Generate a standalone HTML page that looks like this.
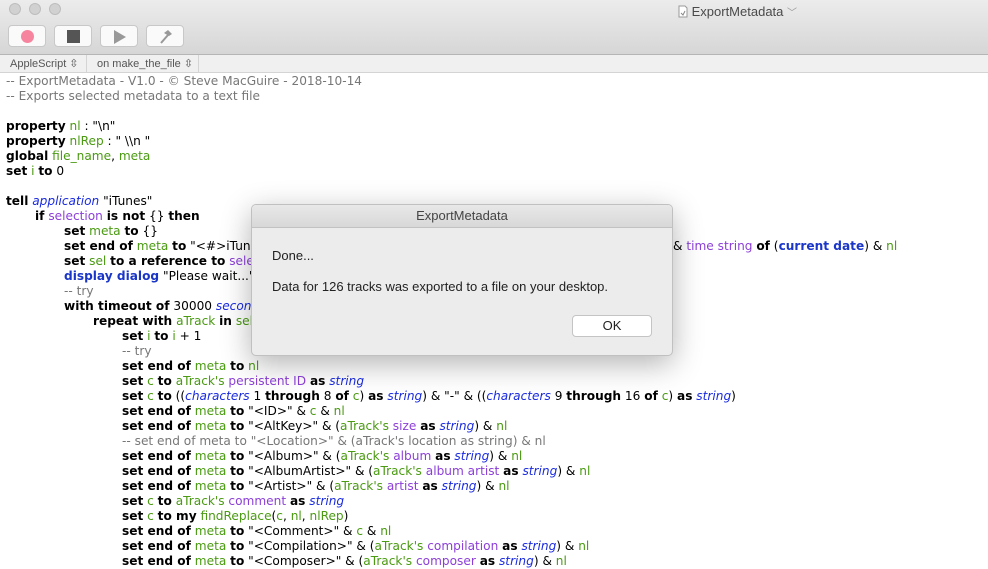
<!DOCTYPE html>
<html><head><meta charset="utf-8"><style>
body{margin:0;width:988px;height:560px;overflow:hidden;background:#fff;font-family:"DejaVu Sans",Verdana,sans-serif;position:relative}
.tb{position:absolute;left:0;top:0;width:988px;height:54px;background:linear-gradient(#ececec,#d6d6d6);border-bottom:1px solid #b5b5b5}
.tl{position:absolute;top:3px;width:12px;height:12px;border-radius:50%;background:#d1d1d1;border:1px solid #bdbdbd;box-sizing:border-box}
.btn{position:absolute;top:25px;width:38px;height:22px;background:#fafafa;border:1px solid #c8c8c8;border-radius:4px;box-sizing:border-box}
.title{position:absolute;left:678px;top:4px;font-family:"Liberation Sans",sans-serif;font-size:13px;color:#4a4a4a}
.nav{position:absolute;left:0;top:55px;width:988px;height:17px;background:#f0f0f0;border-bottom:1px solid #d4d4d4;font-family:"Liberation Sans",sans-serif;font-size:11px;color:#555}
.nav span{position:absolute;top:2px}
.code{position:absolute;left:6px;top:74px;font-size:12.15px;line-height:15px;white-space:pre;color:#000;tab-size:29px;-moz-tab-size:29px}
b{font-weight:bold}
.g{color:#4a9a12}.p{color:#8c3fd8}.i{color:#1a2bdf;font-style:italic}.c{color:#777}.bl{color:#1a36c8;font-weight:bold}
.dlg{position:absolute;left:251px;top:204px;width:420px;height:150px;background:#ececec;border:1px solid #c0c0c0;border-radius:5px;box-shadow:0 8px 30px rgba(0,0,0,.3);font-family:"Liberation Sans",sans-serif;font-size:13px;color:#222;overflow:hidden}
.dt{height:22px;line-height:22px;text-align:center;background:linear-gradient(#e8e8e8,#d8d8d8);border-bottom:1px solid #c2c2c2;color:#444}
</style></head><body>
<div class="tb">
<div class="tl" style="left:9px"></div><div class="tl" style="left:29px"></div><div class="tl" style="left:49px"></div>
<div class="btn" style="left:8px"><div style="position:absolute;left:12px;top:4px;width:13px;height:13px;border-radius:50%;background:#f7849e"></div></div>
<div class="btn" style="left:54px"><div style="position:absolute;left:12px;top:4px;width:13px;height:13px;background:#555"></div></div>
<div class="btn" style="left:100px"><svg style="position:absolute;left:12px;top:4px" width="14" height="14"><path d="M1 0 L13 7 L1 14Z" fill="#999"/></svg></div>
<div class="btn" style="left:146px"><svg style="position:absolute;left:11px;top:3px" width="16" height="16"><path d="M3 14 L10 6" stroke="#999" stroke-width="2"/><path d="M6 4 L10 1 L14 5 L11 7 Z" fill="#999"/></svg></div>
<div class="title"><svg width="10" height="13" style="vertical-align:-2px"><path d="M1 1h6l2 2v9H1z" fill="#fff" stroke="#999"/><path d="M3 8l2 2 2-4" stroke="#888" fill="none"/></svg> ExportMetadata <span style="color:#999;font-size:10px">﹀</span></div>
</div>
<div class="nav"><span style="left:10px">AppleScript ⇳</span><span style="left:86px;top:0;height:17px;border-left:1px solid #d4d4d4"></span><span style="left:97px">on make_the_file ⇳</span><span style="left:198px;top:0;height:17px;border-left:1px solid #d4d4d4"></span></div>
<div class="code"><span class="c">-- ExportMetadata - V1.0 - © Steve MacGuire - 2018-10-14
-- Exports selected metadata to a text file</span>

<b>property</b> <span class="g">nl</span> : "\n"
<b>property</b> <span class="g">nlRep</span> : " \\n "
<b>global</b> <span class="g">file_name</span>, <span class="g">meta</span>
<b>set</b> <span class="g">i</span> <b>to</b> 0

<b>tell</b> <span class="i">application</span> "iTunes"
	<b>if</b> <span class="p">selection</span> <b>is not</b> {} <b>then</b>
		<b>set</b> <span class="g">meta</span> <b>to</b> {}
		<b>set end of</b> <span class="g">meta</span> <b>to</b> "&lt;#&gt;iTunes
		<b>set</b> <span class="g">sel</span> <b>to a reference to</b> <span class="p">selection</span>
		<span class="bl">display dialog</span> "Please wait..."
		<span class="c">-- try</span>
		<b>with timeout of</b> 30000 <span class="i">seconds</span>
			<b>repeat with</b> <span class="g">aTrack</span> <b>in</b> <span class="g">sel</span>
				<b>set</b> <span class="g">i</span> <b>to</b> <span class="g">i</span> + 1
				<span class="c">-- try</span>
				<b>set end of</b> <span class="g">meta</span> <b>to</b> <span class="g">nl</span>
				<b>set</b> <span class="g">c</span> <b>to</b> <span class="g">aTrack's</span> <span class="p">persistent ID</span> <b>as</b> <span class="i">string</span>
				<b>set</b> <span class="g">c</span> <b>to</b> ((<span class="i">characters</span> 1 <b>through</b> 8 <b>of</b> <span class="g">c</span>) <b>as</b> <span class="i">string</span>) &amp; "-" &amp; ((<span class="i">characters</span> 9 <b>through</b> 16 <b>of</b> <span class="g">c</span>) <b>as</b> <span class="i">string</span>)
				<b>set end of</b> <span class="g">meta</span> <b>to</b> "&lt;ID&gt;" &amp; <span class="g">c</span> &amp; <span class="g">nl</span>
				<b>set end of</b> <span class="g">meta</span> <b>to</b> "&lt;AltKey&gt;" &amp; (<span class="g">aTrack's</span> <span class="p">size</span> <b>as</b> <span class="i">string</span>) &amp; <span class="g">nl</span>
				<span class="c">-- set end of meta to "&lt;Location&gt;" &amp; (aTrack's location as string) &amp; nl</span>
				<b>set end of</b> <span class="g">meta</span> <b>to</b> "&lt;Album&gt;" &amp; (<span class="g">aTrack's</span> <span class="p">album</span> <b>as</b> <span class="i">string</span>) &amp; <span class="g">nl</span>
				<b>set end of</b> <span class="g">meta</span> <b>to</b> "&lt;AlbumArtist&gt;" &amp; (<span class="g">aTrack's</span> <span class="p">album artist</span> <b>as</b> <span class="i">string</span>) &amp; <span class="g">nl</span>
				<b>set end of</b> <span class="g">meta</span> <b>to</b> "&lt;Artist&gt;" &amp; (<span class="g">aTrack's</span> <span class="p">artist</span> <b>as</b> <span class="i">string</span>) &amp; <span class="g">nl</span>
				<b>set</b> <span class="g">c</span> <b>to</b> <span class="g">aTrack's</span> <span class="p">comment</span> <b>as</b> <span class="i">string</span>
				<b>set</b> <span class="g">c</span> <b>to my</b> <span class="g">findReplace</span>(<span class="g">c</span>, <span class="g">nl</span>, <span class="g">nlRep</span>)
				<b>set end of</b> <span class="g">meta</span> <b>to</b> "&lt;Comment&gt;" &amp; <span class="g">c</span> &amp; <span class="g">nl</span>
				<b>set end of</b> <span class="g">meta</span> <b>to</b> "&lt;Compilation&gt;" &amp; (<span class="g">aTrack's</span> <span class="p">compilation</span> <b>as</b> <span class="i">string</span>) &amp; <span class="g">nl</span>
				<b>set end of</b> <span class="g">meta</span> <b>to</b> "&lt;Composer&gt;" &amp; (<span class="g">aTrack's</span> <span class="p">composer</span> <b>as</b> <span class="i">string</span>) &amp; <span class="g">nl</span><span style="position:absolute;left:667px;top:165px">&amp; <span class="p">time string</span> <b>of</b> (<span class="bl">current date</span>) &amp; <span class="g">nl</span></span></div>
<div class="dlg"><div class="dt">ExportMetadata</div>
<div style="position:absolute;left:20px;top:43px">Done...</div>
<div style="position:absolute;left:20px;top:74px">Data for 126 tracks was exported to a file on your desktop.</div>
<div style="position:absolute;left:320px;top:110px;width:78px;height:20px;background:#fff;border:1px solid #c4c4c4;border-radius:4px;text-align:center;line-height:20px">OK</div>
</div>
</body></html>
